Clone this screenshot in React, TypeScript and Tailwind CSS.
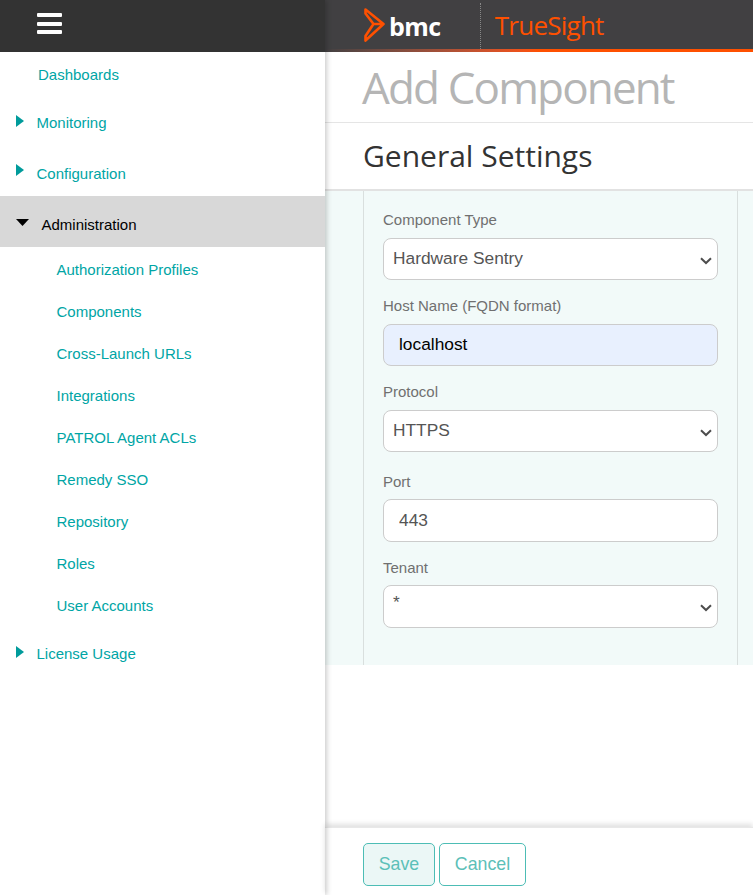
const sans = "font-['Liberation_Sans',Arial,sans-serif]"
const open = "font-['Open_Sans',sans-serif]"

const subItems = [
  "Authorization Profiles",
  "Components",
  "Cross-Launch URLs",
  "Integrations",
  "PATROL Agent ACLs",
  "Remedy SSO",
  "Repository",
  "Roles",
  "User Accounts",
]

function Caret() {
  return (
    <svg width="8" height="12" viewBox="0 0 8 12" className="absolute left-[16px] top-1/2 -mt-[8px]">
      <path d="M0 0 L8 6 L0 12 Z" fill="#009b9b" />
    </svg>
  )
}

function Field({ label, children, className }: { label: string; children: React.ReactNode; className?: string }) {
  return (
    <div className={className}>
      <label className="block text-[15px] leading-[20px] text-[#707070]">{label}</label>
      {children}
    </div>
  )
}

function Select({ value, tenant }: { value: string; tenant?: boolean }) {
  return (
    <div className={`relative w-[335px] ${tenant ? "mt-[7px]" : "mt-[8px]"}`}>
      <select
        defaultValue={value}
        className={`block w-full appearance-none rounded-[8px] border border-[#ccc] bg-white pl-[9px] text-[17.33px] text-[#555] ${tenant ? "h-[43px] pb-[8px]" : "h-[42px]"}`}
      >
        <option>{value}</option>
      </select>
      <svg width="12" height="8" viewBox="0 0 12 8" className="pointer-events-none absolute right-[6px] top-[19px]">
        <path d="M1 1.2 L6 6 L11 1.2" fill="none" stroke="#4d4d4d" strokeWidth="2" />
      </svg>
    </div>
  )
}

export default function App() {
  return (
    <div className={`flex h-[895px] w-[753px] overflow-hidden bg-white ${sans}`}>
      {/* sidebar */}
      <aside className="relative z-10 flex w-[325px] shrink-0 flex-col shadow-[2px_0_5px_rgba(0,0,0,0.2)]">
        <div className="flex h-[52px] shrink-0 items-center bg-[#333333] pb-[5px] pl-[37px]">
          <div className="flex w-[25px] flex-col gap-[4.5px]">
            <span className="h-[4px] rounded-[1px] bg-white" />
            <span className="h-[4px] rounded-[1px] bg-white" />
            <span className="h-[4px] rounded-[1px] bg-white" />
          </div>
        </div>
        <nav className="text-[15px] text-[#00a5a5]">
          <a className="flex h-[46px] items-center pl-[38px] pt-[1px]">Dashboards</a>
          <a className="relative flex h-[50px] items-center pl-[36.5px] pt-[1px]"><Caret />Monitoring</a>
          <a className="relative flex h-[48px] items-center pl-[36.5px] pt-[5px]"><Caret />Configuration</a>
          <a className="relative flex h-[51px] items-center bg-[#d8d8d8] pl-[41.5px] pt-[7px] text-black">
            <svg width="13" height="7" viewBox="0 0 13 7" className="absolute left-[16px] top-[23px]">
              <path d="M0 0 H13 L6.5 7 Z" fill="#000" />
            </svg>
            Administration
          </a>
          <ul className="mt-[2px]">
            {subItems.map((s) => (
              <li key={s} className="flex h-[42px] items-center pl-[56.5px]">{s}</li>
            ))}
          </ul>
          <a className="relative flex h-[54px] items-center pl-[36.5px]"><Caret />License Usage</a>
        </nav>
      </aside>

      {/* main */}
      <main className="flex min-w-0 flex-1 flex-col">
        <header className="relative flex h-[52px] shrink-0 items-center bg-[#414042] pl-[38px]">
          <svg width="22" height="36" viewBox="0 0 22 36" className="shrink-0">
            <path
              d="M2.5 1.5 L20.5 16 L2.5 32.5 V28 L10.5 16 L2.5 5.5 Z M10.5 16 H20"
              fill="none"
              stroke="#fe5000"
              strokeWidth="2.6"
              strokeLinejoin="round"
            />
          </svg>
          <span className={`ml-[4px] text-[25px] font-bold leading-none text-white tracking-[-0.5px] ${open}`}>bmc</span>
          <span className="ml-[39px] h-[46px] border-l border-dotted border-[#888]" />
          <span className={`ml-[14px] -mt-[3px] text-[26px] tracking-[-0.75px] leading-none text-[#fe5000] ${open}`}>TrueSight</span>
          <div className="absolute bottom-0 left-0 right-0 h-[3px] bg-gradient-to-r from-[#414042] to-[#fe5000] to-50%" />
        </header>

        <div className="flex h-[71px] shrink-0 items-center border-b border-[#e5e5e5] pl-[37px]">
          <h1 className={`text-[44px] tracking-[-1.85px] leading-none text-[#b5b5b5] ${open}`}>Add Component</h1>
        </div>

        <div className="flex h-[68px] shrink-0 items-center border-b-2 border-[#e2e2e2] pb-[1px] pl-[38px]">
          <h2 className={`text-[30px] leading-none text-[#333] ${open}`}>General Settings</h2>
        </div>

        <div className="h-[474px] shrink-0 bg-[#f2faf9] pl-[38px] pr-[15px]">
          <div className="h-full border-x border-[#d9dfde] px-[19px] pt-[19px]">
            <Field label="Component Type"><Select value="Hardware Sentry" /></Field>
            <Field label="Host Name (FQDN format)" className="mt-[16px]">
              <input
                readOnly
                value="localhost"
                className="mt-[8px] block h-[42px] w-[335px] rounded-[8px] border border-[#ccc] bg-[#e8f0fe] px-[15px] pb-[2px] text-[17.33px] text-black"
              />
            </Field>
            <Field label="Protocol" className="mt-[16px]"><Select value="HTTPS" /></Field>
            <Field label="Port" className="mt-[20px]">
              <input
                readOnly
                value="443"
                className="mt-[7px] block h-[43px] w-[335px] rounded-[8px] border border-[#ccc] bg-white px-[15px] text-[17.33px] text-[#555]"
              />
            </Field>
            <Field label="Tenant" className="mt-[16px]"><Select value="*" tenant /></Field>
          </div>
        </div>

        <div className="flex-1" />

        <footer className="flex h-[68px] shrink-0 items-start gap-[4px] border-t border-[#e8e8e8] pl-[38px] pt-[15px] shadow-[0_-3px_5px_rgba(0,0,0,0.12)]">
          <button className="h-[43px] w-[72px] rounded-[5px] border border-[#4dbdb5] bg-[#ebf7f6] text-[17.8px] text-[#5cc0b8]">Save</button>
          <button className="h-[43px] w-[87px] rounded-[5px] border border-[#4dbdb5] bg-white text-[17.8px] text-[#5cc0b8]">Cancel</button>
        </footer>
      </main>
    </div>
  )
}
